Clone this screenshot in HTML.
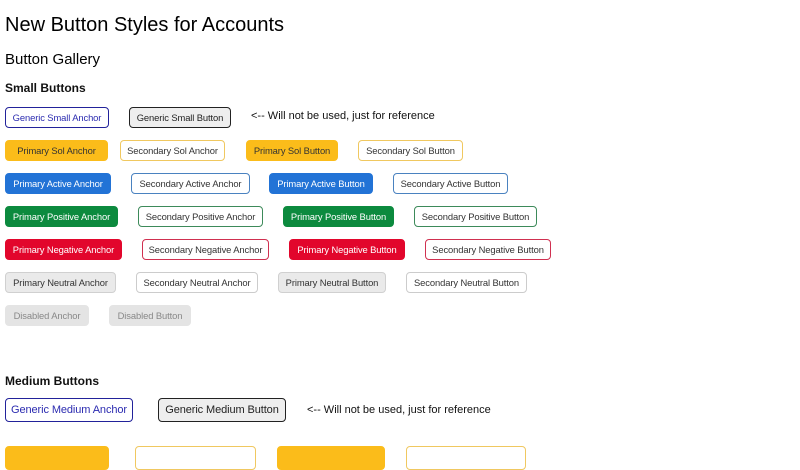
<!DOCTYPE html>
<html><head><style>
body{margin:0;width:800px;height:450px;overflow:hidden;background:#fff;font-family:"Liberation Sans",Arial,sans-serif;color:#111;position:relative}
.t{position:absolute;left:5px;white-space:nowrap}
.b{position:absolute;box-sizing:border-box;height:21px;border-radius:4px;font-size:9.4px;display:flex;align-items:center;justify-content:center;white-space:nowrap;border:1.5px solid;letter-spacing:-0.1px}
.m{height:24px;font-size:11px}
.gA{border-color:#22229a;color:#2b2bb0;background:#fff}
.gB{border-color:#222;background:#eee;color:#222}
.sP{background:#fbbc1a;border-color:#fbbc1a;color:#333}
.sS{background:#fff;border-color:#f0c860;color:#333}
.aP{background:#2273d6;border-color:#2273d6;color:#fff}
.aS{background:#fff;border-color:#4a82c0;color:#333}
.pP{background:#0c8a3e;border-color:#0c8a3e;color:#fff}
.pS{background:#fff;border-color:#3d8a5a;color:#333}
.nP{background:#e2062c;border-color:#e2062c;color:#fff}
.nS{background:#fff;border-color:#d03050;color:#333}
.uP{background:#eaeaea;border-color:#d0d0d0;color:#333}
.uS{background:#fff;border-color:#ccc;color:#333}
.d{background:#e4e4e4;border-color:#e4e4e4;color:#888}
.n{position:absolute;font-size:11px;white-space:nowrap}
</style></head><body>
<div class="t" style="top:14px;font-size:20px;color:#000">New Button Styles for Accounts</div>
<div class="t" style="top:51px;font-size:15px;color:#000">Button Gallery</div>
<div class="t" style="top:81px;font-size:12px;font-weight:bold">Small Buttons</div>

<div class="b gA" style="left:5px;top:107px;width:104px">Generic Small Anchor</div>
<div class="b gB" style="left:129px;top:107px;width:102px">Generic Small Button</div>
<div class="n" style="left:251px;top:110px">&lt;-- Will not be used, just for reference</div>

<div class="b sP" style="left:5px;top:140px;width:103px">Primary Sol Anchor</div>
<div class="b sS" style="left:120px;top:140px;width:105px">Secondary Sol Anchor</div>
<div class="b sP" style="left:246px;top:140px;width:92px">Primary Sol Button</div>
<div class="b sS" style="left:358px;top:140px;width:105px">Secondary Sol Button</div>

<div class="b aP" style="left:5px;top:173px;width:106px">Primary Active Anchor</div>
<div class="b aS" style="left:131px;top:173px;width:119px">Secondary Active Anchor</div>
<div class="b aP" style="left:269px;top:173px;width:104px">Primary Active Button</div>
<div class="b aS" style="left:393px;top:173px;width:115px">Secondary Active Button</div>

<div class="b pP" style="left:5px;top:206px;width:113px">Primary Positive Anchor</div>
<div class="b pS" style="left:138px;top:206px;width:125px">Secondary Positive Anchor</div>
<div class="b pP" style="left:283px;top:206px;width:111px">Primary Positive Button</div>
<div class="b pS" style="left:414px;top:206px;width:123px">Secondary Positive Button</div>

<div class="b nP" style="left:5px;top:239px;width:117px">Primary Negative Anchor</div>
<div class="b nS" style="left:142px;top:239px;width:127px">Secondary Negative Anchor</div>
<div class="b nP" style="left:289px;top:239px;width:116px">Primary Negative Button</div>
<div class="b nS" style="left:425px;top:239px;width:126px">Secondary Negative Button</div>

<div class="b uP" style="left:5px;top:272px;width:111px">Primary Neutral Anchor</div>
<div class="b uS" style="left:136px;top:272px;width:122px">Secondary Neutral Anchor</div>
<div class="b uP" style="left:278px;top:272px;width:108px">Primary Neutral Button</div>
<div class="b uS" style="left:406px;top:272px;width:121px">Secondary Neutral Button</div>

<div class="b d" style="left:5px;top:305px;width:84px">Disabled Anchor</div>
<div class="b d" style="left:109px;top:305px;width:82px">Disabled Button</div>

<div class="t" style="top:374px;font-size:12px;font-weight:bold">Medium Buttons</div>
<div class="b m gA" style="left:5px;top:398px;width:128px">Generic Medium Anchor</div>
<div class="b m gB" style="left:158px;top:398px;width:128px">Generic Medium Button</div>
<div class="n" style="left:307px;top:404px">&lt;-- Will not be used, just for reference</div>

<div class="b m sP" style="left:5px;top:446px;width:104px"></div>
<div class="b m sS" style="left:135px;top:446px;width:121px"></div>
<div class="b m sP" style="left:277px;top:446px;width:108px"></div>
<div class="b m sS" style="left:406px;top:446px;width:120px"></div>
</body></html>
